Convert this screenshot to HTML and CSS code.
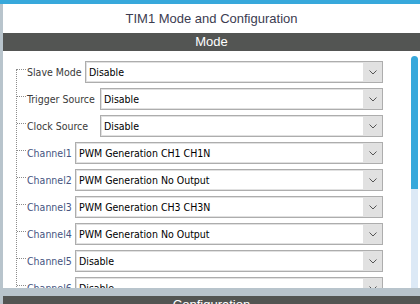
FILE: index.html
```html
<!DOCTYPE html>
<html>
<head>
<meta charset="utf-8">
<link rel="stylesheet" href="styles.css">
</head>
<body>
<div class="topbar"></div>
<div class="frame">
  <div class="title">TIM1 Mode and Configuration</div>
  <div class="section-head">Mode</div>
  <div class="mode-body">
    <div class="tree">
      <div class="tree-lines">
        <div class="row"><span class="stub"></span><span class="label w-slave">Slave Mode</span><div class="combo"><span class="field">Disable</span><span class="arrow"><svg width="8" height="5" viewBox="0 0 8 5"><polyline points="0.5,0.5 4,4 7.5,0.5" fill="none" stroke="#555" stroke-width="1"/></svg></span></div></div>
        <div class="row"><span class="stub"></span><span class="label w-trig">Trigger Source</span><div class="combo"><span class="field">Disable</span><span class="arrow"><svg width="8" height="5" viewBox="0 0 8 5"><polyline points="0.5,0.5 4,4 7.5,0.5" fill="none" stroke="#555" stroke-width="1"/></svg></span></div></div>
        <div class="row"><span class="stub"></span><span class="label w-trig">Clock Source</span><div class="combo"><span class="field">Disable</span><span class="arrow"><svg width="8" height="5" viewBox="0 0 8 5"><polyline points="0.5,0.5 4,4 7.5,0.5" fill="none" stroke="#555" stroke-width="1"/></svg></span></div></div>
        <div class="row"><span class="stub"></span><span class="label w-chan chan">Channel1</span><div class="combo"><span class="field">PWM Generation CH1 CH1N</span><span class="arrow"><svg width="8" height="5" viewBox="0 0 8 5"><polyline points="0.5,0.5 4,4 7.5,0.5" fill="none" stroke="#555" stroke-width="1"/></svg></span></div></div>
        <div class="row"><span class="stub"></span><span class="label w-chan chan">Channel2</span><div class="combo"><span class="field">PWM Generation No Output</span><span class="arrow"><svg width="8" height="5" viewBox="0 0 8 5"><polyline points="0.5,0.5 4,4 7.5,0.5" fill="none" stroke="#555" stroke-width="1"/></svg></span></div></div>
        <div class="row"><span class="stub"></span><span class="label w-chan chan">Channel3</span><div class="combo"><span class="field">PWM Generation CH3 CH3N</span><span class="arrow"><svg width="8" height="5" viewBox="0 0 8 5"><polyline points="0.5,0.5 4,4 7.5,0.5" fill="none" stroke="#555" stroke-width="1"/></svg></span></div></div>
        <div class="row"><span class="stub"></span><span class="label w-chan chan">Channel4</span><div class="combo"><span class="field">PWM Generation No Output</span><span class="arrow"><svg width="8" height="5" viewBox="0 0 8 5"><polyline points="0.5,0.5 4,4 7.5,0.5" fill="none" stroke="#555" stroke-width="1"/></svg></span></div></div>
        <div class="row"><span class="stub"></span><span class="label w-chan chan">Channel5</span><div class="combo"><span class="field">Disable</span><span class="arrow"><svg width="8" height="5" viewBox="0 0 8 5"><polyline points="0.5,0.5 4,4 7.5,0.5" fill="none" stroke="#555" stroke-width="1"/></svg></span></div></div>
        <div class="row"><span class="stub"></span><span class="label w-chan chan">Channel6</span><div class="combo"><span class="field">Disable</span><span class="arrow"><svg width="8" height="5" viewBox="0 0 8 5"><polyline points="0.5,0.5 4,4 7.5,0.5" fill="none" stroke="#555" stroke-width="1"/></svg></span></div></div>
      </div>
    </div>
    <div class="scroll"><div class="thumb"></div><div class="track"></div></div>
  </div>
  <div class="band"></div>
  <div class="section-head">Configuration</div>
</div>
</body>
</html>
```
FILE: styles.css
```css
html, body {
  margin: 0;
  padding: 0;
}
body {
  width: 420px;
  height: 304px;
  overflow: hidden;
  background: #ffffff;
  font-family: "Liberation Sans", Arial, sans-serif;
}
.topbar {
  height: 4px;
  background: #37a8db;
}
.frame {
  display: flex;
  flex-direction: column;
  height: 300px;
  border-left: 3px solid #b8c4cc;
}
.title {
  height: 29px;
  line-height: 30px;
  text-align: center;
  font-size: 13px;
  color: #3c3c50;
  flex: none;
}
.section-head {
  height: 18px;
  line-height: 18px;
  flex: none;
  background: #535553;
  color: #ffffff;
  text-align: center;
  font-size: 13px;
}
.mode-body {
  height: 237px;
  flex: none;
  display: flex;
  overflow: hidden;
  background: #ffffff;
}
.tree {
  flex: 1;
  padding: 18px 28px 0 13px;
  font-family: "DejaVu Sans Condensed", "DejaVu Sans", sans-serif;
  font-stretch: condensed;
  font-size: 10.5px;
}
.tree-lines {
  display: flex;
  flex-direction: column;
  gap: 5px;
  border-left: 1px dotted #8c8c8c;
}
.row {
  display: flex;
  align-items: center;
  height: 22px;
  flex: none;
}
.row:first-child {
  margin-top: -8px;
}
.stub {
  align-self: flex-start;
  margin-top: 8px;
  width: 9px;
  height: 0;
  margin-right: 1px;
  border-top: 1px dotted #8c8c8c;
  flex: none;
}
.label {
  flex: none;
  color: #3a3a3a;
  white-space: nowrap;
}
.label.chan {
  color: #46547f;
}
.w-slave { width: 58px; }
.w-trig { width: 73px; }
.w-chan { width: 48px; }
.combo {
  flex: 1;
  display: flex;
  height: 20px;
  border: 1px solid #adadad;
  background: #e1e1e1;
}
.field {
  flex: 1;
  margin: 1px 0 1px 1px;
  background: #ffffff;
  color: #000000;
  padding-left: 2px;
  line-height: 18px;
  white-space: nowrap;
  overflow: hidden;
}
.arrow {
  width: 19px;
  flex: none;
  display: flex;
  align-items: center;
  justify-content: center;
}
.arrow svg {
  display: block;
}
.scroll {
  width: 7px;
  flex: none;
  margin-right: 2px;
  padding-top: 5px;
  display: flex;
  flex-direction: column;
}
.thumb {
  height: 133px;
  flex: none;
  background: #37a8db;
  border-radius: 4px 4px 0 0;
}
.track {
  flex: 1;
  background: #dce9f6;
}
.band {
  height: 8px;
  flex: none;
  background: #b8c4cc;
}
```
